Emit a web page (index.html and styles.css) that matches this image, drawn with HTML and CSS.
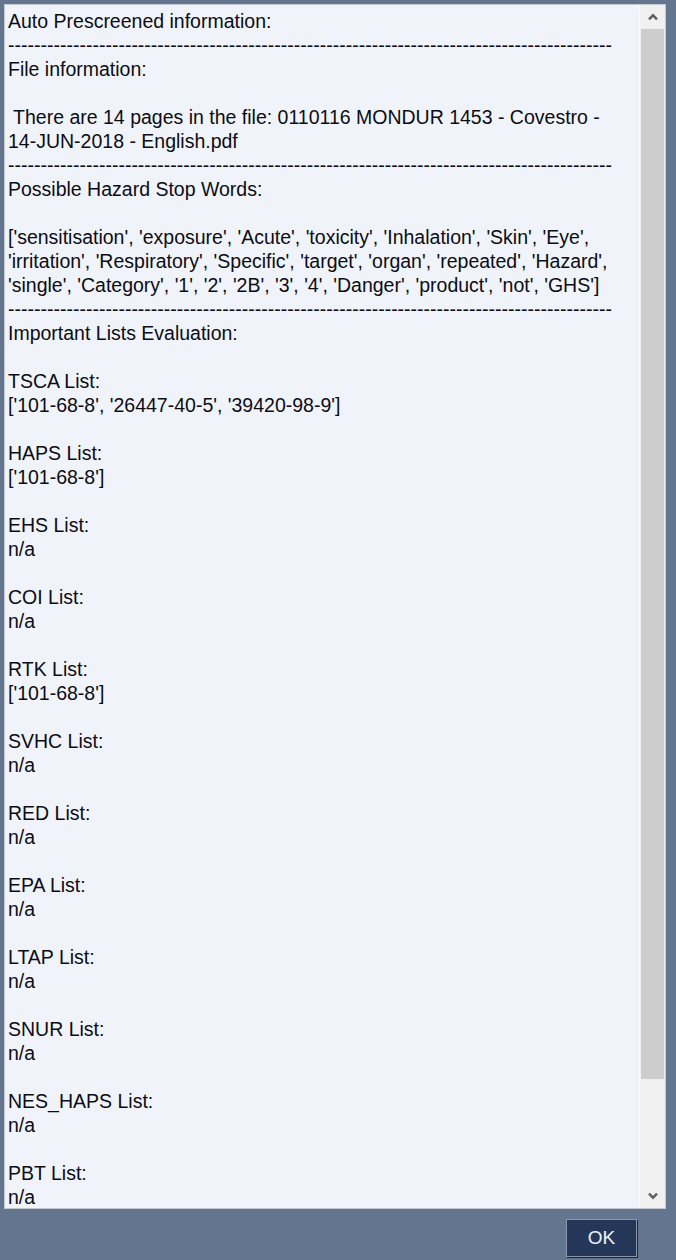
FILE: index.html
```html
<!DOCTYPE html>
<html>
<head>
<meta charset="utf-8">
<link rel="stylesheet" href="styles.css">
</head>
<body>
<div class="panel">
  <div class="text">
<div class="ln">Auto Prescreened information:</div>
<div class="ln dash">---------------------------------------------------------------------------------------------</div>
<div class="ln">File information:</div>
<div class="ln"> </div>
<div class="ln"> There are 14 pages in the file: 0110116 MONDUR 1453 - Covestro -</div>
<div class="ln">14-JUN-2018 - English.pdf</div>
<div class="ln dash">---------------------------------------------------------------------------------------------</div>
<div class="ln">Possible Hazard Stop Words:</div>
<div class="ln"> </div>
<div class="ln">['sensitisation', 'exposure', 'Acute', 'toxicity', 'Inhalation', 'Skin', 'Eye',</div>
<div class="ln">'irritation', 'Respiratory', 'Specific', 'target', 'organ', 'repeated', 'Hazard',</div>
<div class="ln">'single', 'Category', '1', '2', '2B', '3', '4', 'Danger', 'product', 'not', 'GHS']</div>
<div class="ln dash">---------------------------------------------------------------------------------------------</div>
<div class="ln">Important Lists Evaluation:</div>
<div class="ln"> </div>
<div class="ln">TSCA List:</div>
<div class="ln">['101-68-8', '26447-40-5', '39420-98-9']</div>
<div class="ln"> </div>
<div class="ln">HAPS List:</div>
<div class="ln">['101-68-8']</div>
<div class="ln"> </div>
<div class="ln">EHS List:</div>
<div class="ln">n/a</div>
<div class="ln"> </div>
<div class="ln">COI List:</div>
<div class="ln">n/a</div>
<div class="ln"> </div>
<div class="ln">RTK List:</div>
<div class="ln">['101-68-8']</div>
<div class="ln"> </div>
<div class="ln">SVHC List:</div>
<div class="ln">n/a</div>
<div class="ln"> </div>
<div class="ln">RED List:</div>
<div class="ln">n/a</div>
<div class="ln"> </div>
<div class="ln">EPA List:</div>
<div class="ln">n/a</div>
<div class="ln"> </div>
<div class="ln">LTAP List:</div>
<div class="ln">n/a</div>
<div class="ln"> </div>
<div class="ln">SNUR List:</div>
<div class="ln">n/a</div>
<div class="ln"> </div>
<div class="ln">NES_HAPS List:</div>
<div class="ln">n/a</div>
<div class="ln"> </div>
<div class="ln">PBT List:</div>
<div class="ln">n/a</div>
  </div>
  <div class="scrollbar">
    <div class="sb-btn">
      <svg width="12" height="8" viewBox="0 0 12 8"><polyline points="2,6.3 6,2.3 10,6.3" fill="none" stroke="#5f5f5f" stroke-width="2.4"/></svg>
    </div>
    <div class="sb-track">
      <div class="sb-thumb"></div>
    </div>
    <div class="sb-btn">
      <svg width="12" height="8" viewBox="0 0 12 8"><polyline points="2,1.7 6,5.7 10,1.7" fill="none" stroke="#5f5f5f" stroke-width="2.4"/></svg>
    </div>
  </div>
</div>
<div class="footer">
  <button class="ok">OK</button>
</div>
</body>
</html>
```
FILE: styles.css
```css
html, body {
  margin: 0;
  padding: 0;
}
body {
  background: #647590;
  width: 676px;
  height: 1260px;
  overflow: hidden;
  font-family: "Liberation Sans", Arial, sans-serif;
}
.panel {
  margin: 4px 0 0 4px;
  width: 662px;
  height: 1205px;
  box-sizing: border-box;
  border: 1px solid #c4c8cf;
  display: flex;
  background: #f0f4fa;
}
.text {
  flex: 1;
  overflow: hidden;
  padding: 4px 0 0 3px;
  color: #0c0c14;
  font-size: 19.5px;
  line-height: 24px;
  border-right: 1px solid #fbfcfd;
}
.ln {
  white-space: pre;
  height: 24px;
}
.dash {
  letter-spacing: 0;
}
.scrollbar {
  width: 25px;
  display: flex;
  flex-direction: column;
  background: #f0f0f0;
}
.sb-btn {
  height: 24px;
  display: flex;
  align-items: center;
  justify-content: center;
  flex: none;
}
.sb-track {
  flex: 1;
  padding: 0 1px;
  display: flex;
  flex-direction: column;
}
.sb-thumb {
  height: 1050px;
  background: #cdcdcd;
}
.footer {
  display: flex;
  justify-content: flex-end;
  padding: 10px 39px 0 0;
}
.ok {
  width: 71px;
  height: 38px;
  background: #253758;
  color: #eef2f8;
  font-family: "Liberation Sans", Arial, sans-serif;
  font-size: 19px;
  border: 1px solid #8c97a8;
  box-shadow: 1px 1px 0 #1a2436;
  padding: 0;
}
```
